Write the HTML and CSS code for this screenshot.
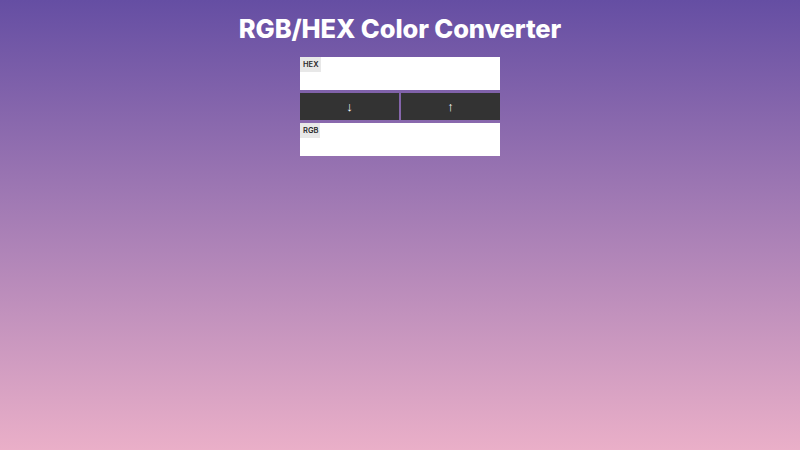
FILE: index.html
```html
<!DOCTYPE html>
<html lang="en">
<head>
	<meta charset="UTF-8">
	<title>RGB/HEX Color Converter</title>
	<link rel="stylesheet" href="styles.css">
</head>
<body>

	<h1>RGB/HEX Color Converter</h1>
	<div class="converter">
		<!-- hex input -->
		<div class="field">
			<span class="tag">HEX</span>
			<input type="text" id="hex" class="txt">
		</div>
		<div class="btns">
			<button type="button" class="btn">↓</button>
			<button type="button" class="btn">↑</button>
		</div>
		<!-- rgb input -->
		<div class="field">
			<span class="tag">RGB</span>
			<input type="text" id="rgb" class="txt">
		</div>
	</div>

</body>
</html>
```

FILE: styles.css
```css
html{height: 100%;}
body{
	margin: 0;
	min-height: 100%;
	background: linear-gradient(#654ea3, #eaafc8);
	font-family: "Inter", "Liberation Sans", sans-serif;
}
h1{
	margin: 0;
	padding-top: 11px;
	text-align: center;
	color: #fff;
	font-size: 25.5px;
	font-weight: 800;
	line-height: 36px;
	letter-spacing: -0.1px;
}
.converter{
	width: 200px;
	margin: 10px auto 0;
	display: flex;
	flex-direction: column;
	gap: 3px;
}
.field{
	position: relative;
	height: 33px;
	background-color: #fff;
}
.tag{
	position: absolute;
	left: 0;
	top: 0;
	padding: 2px 2px 2px 3px;
	font-size: 7.5px;
	font-weight: 600;
	line-height: 11px;
	color: #2a2a2a;
	background-color: #e8e8e8;
}
.txt{
	width: 100%;
	height: 100%;
	box-sizing: border-box;
	border: none;
	outline: none;
	background: transparent;
}
.btns{
	display: flex;
	gap: 2px;
	height: 27px;
}
.btn{
	flex: 1;
	border: none;
	cursor: pointer;
	background-color: #333;
	color: #fff;
	font-size: 13px;
	font-family: "Liberation Sans", sans-serif;
}
```
